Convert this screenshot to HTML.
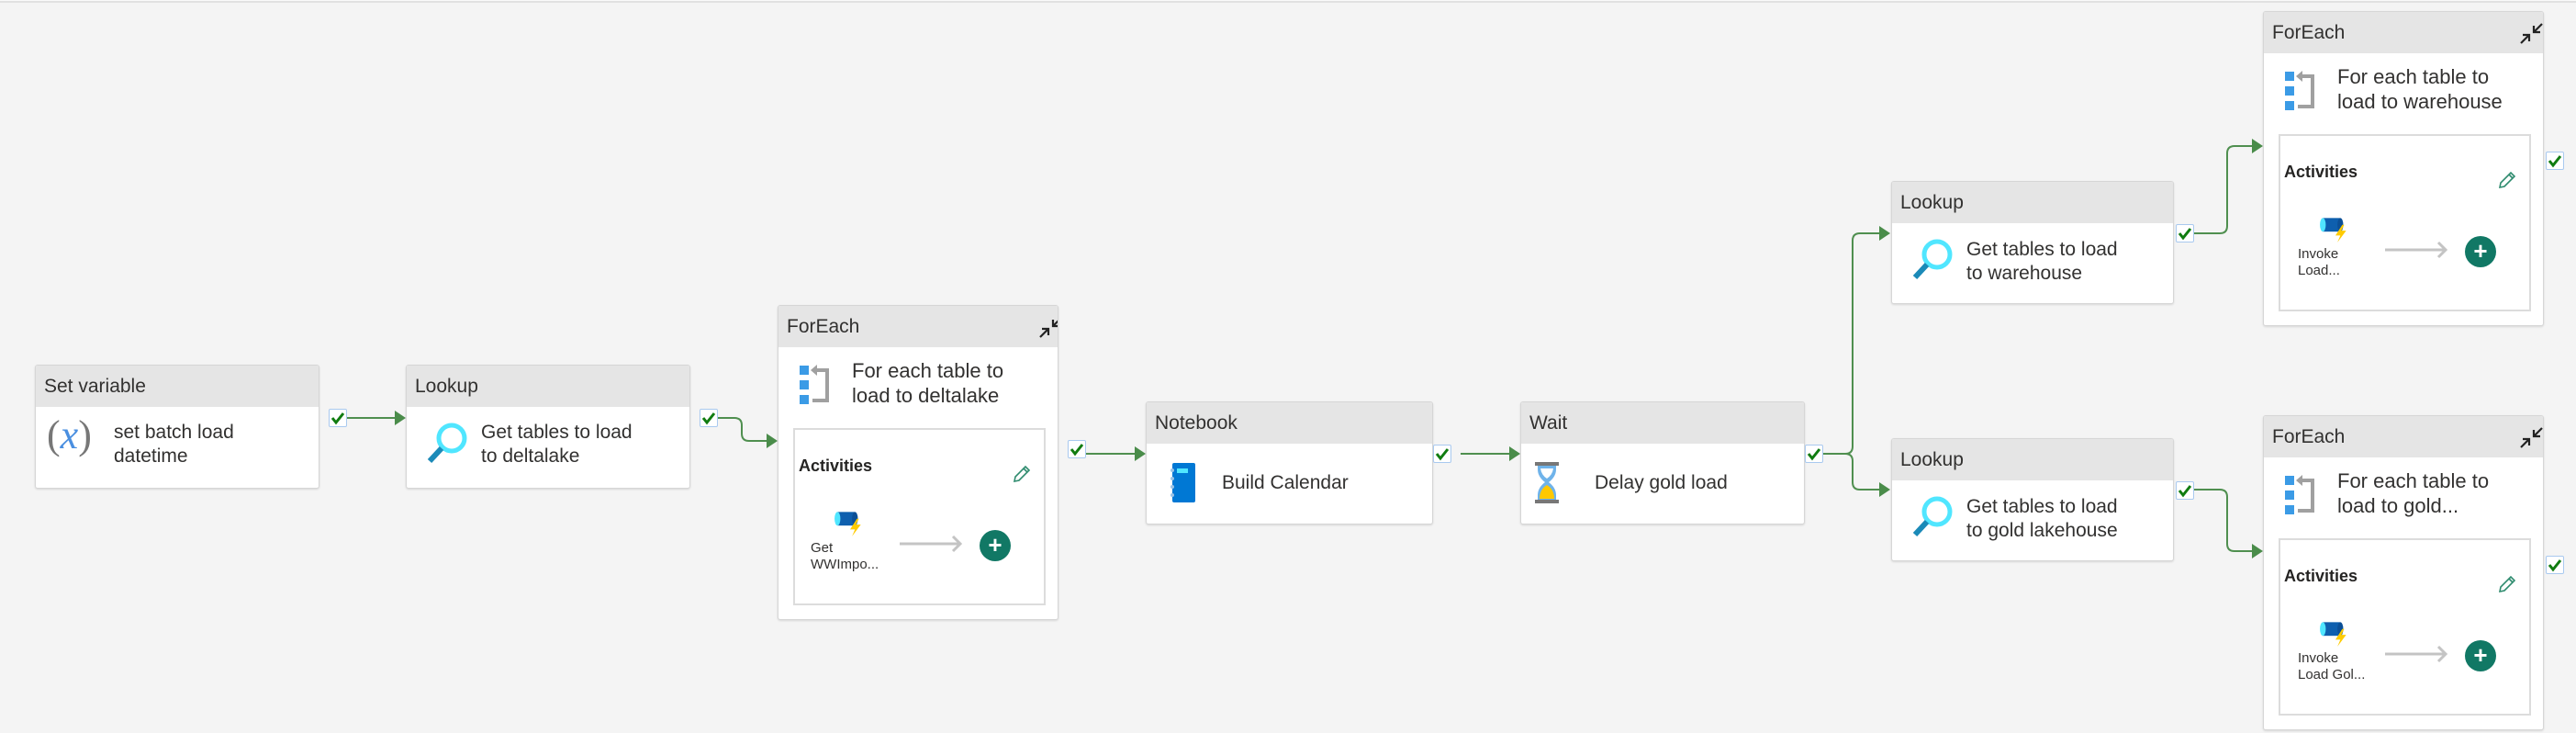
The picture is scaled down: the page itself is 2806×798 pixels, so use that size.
<!DOCTYPE html>
<html><head><meta charset="utf-8">
<style>
*{box-sizing:border-box;margin:0;padding:0}
body{width:2806px;height:798px;background:#f4f4f4;position:relative;overflow:hidden;font-family:"Liberation Sans",sans-serif;color:#323130}
.top{position:absolute;left:0;top:0;width:2806px;height:3px;background:#fafafa;border-bottom:2px solid #e1e1e1}
.card{position:absolute;background:#fff;border:1px solid #d6d6d6;border-radius:3px;box-shadow:0 1px 2px rgba(0,0,0,.12);overflow:hidden}
.hd{position:absolute;left:0;top:0;right:0;height:45px;background:#e5e5e5;font-size:21px;line-height:45px;padding-left:9px;color:#323130}
.tx{position:absolute;font-size:21px;line-height:26px;color:#323130;white-space:nowrap}
.ico{position:absolute}
.chk{position:absolute;width:20px;height:20px;background:#fff;border:1px solid #a9c9ef;border-radius:2px}
.inner{position:absolute;left:16px;top:133px;width:275px;height:193px;border:2px solid #dcdcdc;background:#fff}
.act{position:absolute;left:4px;top:29px;font-size:18px;font-weight:bold;color:#252423}
.lbl{position:absolute;left:19px;top:120px;font-size:15px;line-height:18px;color:#323130;white-space:nowrap}
</style></head><body>
<div class="top"></div>

<svg width="2806" height="798" style="position:absolute;left:0;top:0" fill="none">
<g stroke="#4f8f4f" stroke-width="2">
<path d="M378 455 H430"/>
<path d="M782 455 H800 Q808 455 808 463 V472 Q808 480 816 480 H835"/>
<path d="M1183 494 H1236"/>
<path d="M1591 494 H1644"/>
<path d="M1986 494 H2010 Q2018 494 2018 486 V262 Q2018 254 2026 254 H2047"/>
<path d="M2010 494 Q2018 494 2018 502 V525 Q2018 533 2026 533 H2047"/>
<path d="M2390 254 H2418 Q2426 254 2426 246 V167 Q2426 159 2434 159 H2453"/>
<path d="M2390 533 H2418 Q2426 533 2426 541 V592 Q2426 600 2434 600 H2453"/>
</g>
<g fill="#4a8c4a">
<path d="M430 447 L442 455 L430 463Z"/>
<path d="M835 472 L847 480 L835 488Z"/>
<path d="M1236 486 L1248 494 L1236 502Z"/>
<path d="M1644 486 L1656 494 L1644 502Z"/>
<path d="M2047 246 L2059 254 L2047 262Z"/>
<path d="M2047 525 L2059 533 L2047 541Z"/>
<path d="M2453 151 L2465 159 L2453 167Z"/>
<path d="M2453 592 L2465 600 L2453 608Z"/>
</g>
</svg>

<!-- Set variable -->
<div class="card" style="left:38px;top:397px;width:310px;height:135px">
<div class="hd">Set variable</div>
<div class="ico" style="left:12px;top:52px;font-family:'Liberation Serif',serif;font-size:44px;line-height:48px;color:#777">(<span style="color:#4a8fe0;font-style:italic">x</span>)</div>
<div class="tx" style="left:85px;top:60px">set batch load<br>datetime</div>
</div>
<div class="chk" style="left:358px;top:445px"></div>

<!-- Lookup 1 -->
<div class="card" style="left:442px;top:397px;width:310px;height:135px">
<div class="hd">Lookup</div>
<svg class="ico" style="left:20px;top:62px" width="46" height="48"><circle cx="29" cy="17" r="14" stroke="#50e6ff" stroke-width="5" fill="none"/><path d="M18 28 L5 42" stroke="#1b8ab8" stroke-width="6" stroke-linecap="butt"/></svg>
<div class="tx" style="left:81px;top:60px">Get tables to load<br>to deltalake</div>
</div>
<div class="chk" style="left:762px;top:445px"></div>

<!-- Notebook -->
<div class="card" style="left:1248px;top:437px;width:313px;height:134px">
<div class="hd">Notebook</div>
<svg class="ico" style="left:22px;top:65px" width="40" height="46"><rect x="6" y="1" width="25" height="43" rx="2" fill="#0078d4"/><rect x="11" y="7" width="12" height="5" fill="#50e6ff"/><g fill="#9cc3e6"><circle cx="6" cy="9" r="2"/><circle cx="6" cy="18" r="2"/><circle cx="6" cy="27" r="2"/><circle cx="6" cy="36" r="2"/></g></svg>
<div class="tx" style="left:82px;top:75px">Build Calendar</div>
</div>
<div class="chk" style="left:1561px;top:484px"></div>

<!-- Wait -->
<div class="card" style="left:1656px;top:437px;width:310px;height:134px">
<div class="hd">Wait</div>
<svg class="ico" style="left:14px;top:65px" width="30" height="46"><rect x="1" y="0" width="26" height="4" fill="#777"/><rect x="1" y="41" width="26" height="4" fill="#777"/><path d="M4 4 H24 V8 Q24 16 16 22 Q24 28 24 36 V41 H4 V36 Q4 28 12 22 Q4 16 4 8Z" fill="#6fb3ea"/><path d="M7 7 H21 Q20 14 14 18 Q8 14 7 7Z" fill="#fff"/><path d="M6 40 Q6 30 14 25 Q22 30 22 40Z" fill="#ffc800"/></svg>
<div class="tx" style="left:80px;top:75px">Delay gold load</div>
</div>
<div class="chk" style="left:1966px;top:484px"></div>

<!-- Lookup 2 -->
<div class="card" style="left:2060px;top:197px;width:308px;height:134px">
<div class="hd">Lookup</div>
<svg class="ico" style="left:20px;top:62px" width="46" height="48"><circle cx="29" cy="17" r="14" stroke="#50e6ff" stroke-width="5" fill="none"/><path d="M18 28 L5 42" stroke="#1b8ab8" stroke-width="6"/></svg>
<div class="tx" style="left:81px;top:61px">Get tables to load<br>to warehouse</div>
</div>
<div class="chk" style="left:2370px;top:244px"></div>

<!-- Lookup 3 -->
<div class="card" style="left:2060px;top:477px;width:308px;height:134px">
<div class="hd">Lookup</div>
<svg class="ico" style="left:20px;top:62px" width="46" height="48"><circle cx="29" cy="17" r="14" stroke="#50e6ff" stroke-width="5" fill="none"/><path d="M18 28 L5 42" stroke="#1b8ab8" stroke-width="6"/></svg>
<div class="tx" style="left:81px;top:61px">Get tables to load<br>to gold lakehouse</div>
</div>
<div class="chk" style="left:2370px;top:524px"></div>

<!-- ForEach cards -->
<div class="card" style="left:847px;top:332px;width:306px;height:343px">
<div class="hd">ForEach</div>
<svg class="ico" style="left:282px;top:10px" width="30" height="28" stroke="#222" stroke-width="2.2" fill="none"><path d="M3 24 L12 15 M5 15 H12 V22"/><path d="M26 3 L17 12 M17 5 V12 H24"/></svg>
<svg class="ico" style="left:23px;top:64px" width="36" height="46"><g fill="#3b9be6"><rect x="0" y="1" width="10" height="10"/><rect x="0" y="17" width="10" height="10"/><rect x="0" y="33" width="10" height="10"/></g><path d="M15 6 H30 V39 H14" stroke="#a0a0a0" stroke-width="4" fill="none"/><path d="M12 6 L19 0 V12Z" fill="#a0a0a0"/></svg>
<div class="tx" style="left:80px;top:57px;font-size:22px;line-height:27px">For each table to<br>load to deltalake</div>
<div class="inner">
<div class="act">Activities</div>
<svg class="ico" style="left:236px;top:37px" width="22" height="22" stroke="#2e8b6e" stroke-width="1.6" fill="none"><path d="M3 19 L4 14 L15 3 L19 7 L8 18 Z M13 5 L17 9"/></svg>
<svg class="ico" style="left:42px;top:85px" width="36" height="32" viewBox="0 0 34 28"><rect x="4" y="3" width="18" height="14" fill="#0e5fae"/><ellipse cx="4" cy="10" rx="3" ry="7" fill="#50e6ff"/><ellipse cx="22" cy="10" rx="3" ry="7" fill="#0b4f96"/><path d="M24 10 L17 21 H22 L19 28 L28 16 H23 L26 10Z" fill="#ffcb00"/></svg>
<div class="lbl" style="left:17px">Get<br>WWImpo...</div>
<svg class="ico" style="left:114px;top:114px" width="72" height="20" stroke="#c4c4c4" stroke-width="3" fill="none"><path d="M0 10 H66 M58 2 L66 10 L58 18"/></svg>
<div class="ico" style="left:201px;top:109px;width:34px;height:34px;border-radius:50%;background:#117865;color:#fff;font-weight:bold;font-size:26px;line-height:33px;text-align:center">+</div>
</div>
</div>
<div class="chk" style="left:1163px;top:479px"></div>

<div class="card" style="left:2465px;top:12px;width:306px;height:343px">
<div class="hd">ForEach</div>
<svg class="ico" style="left:277px;top:10px" width="30" height="28" stroke="#222" stroke-width="2.2" fill="none"><path d="M3 24 L12 15 M5 15 H12 V22"/><path d="M26 3 L17 12 M17 5 V12 H24"/></svg>
<svg class="ico" style="left:23px;top:64px" width="36" height="46"><g fill="#3b9be6"><rect x="0" y="1" width="10" height="10"/><rect x="0" y="17" width="10" height="10"/><rect x="0" y="33" width="10" height="10"/></g><path d="M15 6 H30 V39 H14" stroke="#a0a0a0" stroke-width="4" fill="none"/><path d="M12 6 L19 0 V12Z" fill="#a0a0a0"/></svg>
<div class="tx" style="left:80px;top:57px;font-size:22px;line-height:27px">For each table to<br>load to warehouse</div>
<div class="inner">
<div class="act">Activities</div>
<svg class="ico" style="left:236px;top:37px" width="22" height="22" stroke="#2e8b6e" stroke-width="1.6" fill="none"><path d="M3 19 L4 14 L15 3 L19 7 L8 18 Z M13 5 L17 9"/></svg>
<svg class="ico" style="left:42px;top:85px" width="36" height="32" viewBox="0 0 34 28"><rect x="4" y="3" width="18" height="14" fill="#0e5fae"/><ellipse cx="4" cy="10" rx="3" ry="7" fill="#50e6ff"/><ellipse cx="22" cy="10" rx="3" ry="7" fill="#0b4f96"/><path d="M24 10 L17 21 H22 L19 28 L28 16 H23 L26 10Z" fill="#ffcb00"/></svg>
<div class="lbl">Invoke<br>Load...</div>
<svg class="ico" style="left:114px;top:114px" width="72" height="20" stroke="#c4c4c4" stroke-width="3" fill="none"><path d="M0 10 H66 M58 2 L66 10 L58 18"/></svg>
<div class="ico" style="left:201px;top:109px;width:34px;height:34px;border-radius:50%;background:#117865;color:#fff;font-weight:bold;font-size:26px;line-height:33px;text-align:center">+</div>
</div>
</div>
<div class="chk" style="left:2773px;top:165px"></div>

<div class="card" style="left:2465px;top:452px;width:306px;height:343px">
<div class="hd">ForEach</div>
<svg class="ico" style="left:277px;top:10px" width="30" height="28" stroke="#222" stroke-width="2.2" fill="none"><path d="M3 24 L12 15 M5 15 H12 V22"/><path d="M26 3 L17 12 M17 5 V12 H24"/></svg>
<svg class="ico" style="left:23px;top:64px" width="36" height="46"><g fill="#3b9be6"><rect x="0" y="1" width="10" height="10"/><rect x="0" y="17" width="10" height="10"/><rect x="0" y="33" width="10" height="10"/></g><path d="M15 6 H30 V39 H14" stroke="#a0a0a0" stroke-width="4" fill="none"/><path d="M12 6 L19 0 V12Z" fill="#a0a0a0"/></svg>
<div class="tx" style="left:80px;top:57px;font-size:22px;line-height:27px">For each table to<br>load to gold...</div>
<div class="inner">
<div class="act">Activities</div>
<svg class="ico" style="left:236px;top:37px" width="22" height="22" stroke="#2e8b6e" stroke-width="1.6" fill="none"><path d="M3 19 L4 14 L15 3 L19 7 L8 18 Z M13 5 L17 9"/></svg>
<svg class="ico" style="left:42px;top:85px" width="36" height="32" viewBox="0 0 34 28"><rect x="4" y="3" width="18" height="14" fill="#0e5fae"/><ellipse cx="4" cy="10" rx="3" ry="7" fill="#50e6ff"/><ellipse cx="22" cy="10" rx="3" ry="7" fill="#0b4f96"/><path d="M24 10 L17 21 H22 L19 28 L28 16 H23 L26 10Z" fill="#ffcb00"/></svg>
<div class="lbl">Invoke<br>Load Gol...</div>
<svg class="ico" style="left:114px;top:114px" width="72" height="20" stroke="#c4c4c4" stroke-width="3" fill="none"><path d="M0 10 H66 M58 2 L66 10 L58 18"/></svg>
<div class="ico" style="left:201px;top:109px;width:34px;height:34px;border-radius:50%;background:#117865;color:#fff;font-weight:bold;font-size:26px;line-height:33px;text-align:center">+</div>
</div>
</div>
<div class="chk" style="left:2773px;top:605px"></div>

<!-- check marks -->
<svg width="2806" height="798" style="position:absolute;left:0;top:0;pointer-events:none" fill="none" stroke="#107c10" stroke-width="3">
<path d="M362 455 l4 5 l8 -10"/>
<path d="M766 455 l4 5 l8 -10"/>
<path d="M1167 489 l4 5 l8 -10"/>
<path d="M1565 494 l4 5 l8 -10"/>
<path d="M1970 494 l4 5 l8 -10"/>
<path d="M2374 254 l4 5 l8 -10"/>
<path d="M2374 534 l4 5 l8 -10"/>
<path d="M2777 175 l4 5 l8 -10"/>
<path d="M2777 615 l4 5 l8 -10"/>
</svg>
</body></html>
